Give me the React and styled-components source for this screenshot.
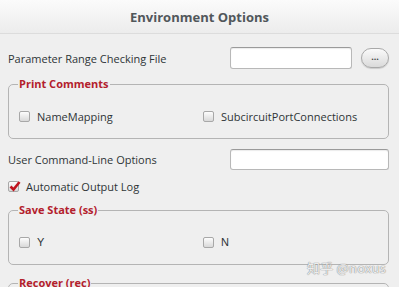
import React from "react";
import styled, { createGlobalStyle } from "styled-components";

const GlobalStyle = createGlobalStyle`
	html, body {
		margin: 0;
		padding: 0;
		background: #efefef;
	}
	body {
		font-family: "Open Sans", "Noto Sans", sans-serif;
		font-size: 11px;
		color: #2e3436;
	}
`;

const Window = styled.div`
	width: 399px;
	height: 287px;
	overflow: hidden;
	position: relative;
	background: #efefef;
`;

const TitleBar = styled.div`
	height: 34px;
	display: flex;
	align-items: center;
	justify-content: center;
	background: linear-gradient(#fbfbfb, #ececec);
	border-bottom: 1px solid #dcdcdc;
	box-sizing: border-box;
	font-size: 13px;
	font-weight: 700;
	color: #51575b;
`;

const Body = styled.div`
	padding: 0 10px 0 8px;
	display: flex;
	flex-direction: column;
`;

const FieldRow = styled.div`
	display: grid;
	grid-template-columns: ${({ cols }) => cols};
	column-gap: 9px;
	align-items: center;
	margin-top: ${({ top }) => top}px;
	height: ${({ h }) => h}px;
`;

const TextInput = styled.div`
	height: 100%;
	background: #fff;
	border: 1px solid #b8b8b8;
	border-top-color: #9a9a9a;
	border-radius: 3px;
	box-sizing: border-box;
	box-shadow: inset 0 1px 1px rgba(0, 0, 0, 0.08);
`;

const DotsButton = styled.div`
	height: 20px;
	border-radius: 10px;
	border: 1px solid #a9a9a9;
	background: linear-gradient(#fafafa, #dadada);
	box-shadow: 0 1px 1px rgba(0, 0, 0, 0.15);
	display: flex;
	align-items: center;
	justify-content: center;
	font-size: 9px;
	font-weight: 700;
	color: #444;
	box-sizing: border-box;
	padding-bottom: 3px;
`;

const Group = styled.fieldset`
	margin: ${({ top }) => top}px 0 0;
	padding: 16px 8px ${({ bottom }) => bottom}px 10px;
	border: 1px solid #b4b4b4;
	border-radius: 5px;
	min-width: 0;
`;

const GroupTitle = styled.legend`
	padding: 0 1px;
	margin-left: -1px;
	font-weight: 700;
	font-size: 11px;
	line-height: 16px;
	color: #b3202c;
`;

const OptionGrid = styled.div`
	display: grid;
	grid-template-columns: 184px 1fr;
`;

const Check = styled.label`
	display: flex;
	align-items: center;
	gap: 7px;
	height: 16px;
	margin-top: ${({ top }) => top || 0}px;
	font-family: ${({ plain }) =>
		plain ? '"Liberation Sans", Arial, sans-serif' : "inherit"};
`;

const Box = styled.span`
	width: 11px;
	height: 11px;
	box-sizing: border-box;
	border: 1px solid #a8a8a8;
	border-radius: 2px;
	background: linear-gradient(#fdfdfd, #d9d9d9);
	position: relative;
	flex: none;
`;

const Tick = styled.svg`
	position: absolute;
	left: 0;
	top: -2px;
`;

const Watermark = styled.div`
	position: absolute;
	left: 307px;
	top: 258px;
	font-family: "Noto Sans CJK SC", "Liberation Sans", sans-serif;
	font-size: 13px;
	color: rgba(255, 255, 255, 0.85);
	text-shadow: 0 0 1px #8a8a8a, 0 0 1px #8a8a8a;
	letter-spacing: 0.2px;
`;

const CheckBox = ({ checked }) => (
	<Box>
		{checked && (
			<Tick width="12" height="12" viewBox="0 0 12 12">
				<path
					d="M1.5 6.5 L4.5 9.5 L10.5 2"
					fill="none"
					stroke="#c0141e"
					strokeWidth="2.6"
				/>
			</Tick>
		)}
	</Box>
);

const App = () => {
	return (
		<Window>
			<GlobalStyle />
			<TitleBar>Environment Options</TitleBar>
			<Body>
				<FieldRow cols="1fr 122px 28px" top={13} h={22}>
					<span>Parameter Range Checking File</span>
					<TextInput />
					<DotsButton>...</DotsButton>
				</FieldRow>

				<Group top={7} bottom={14}>
					<GroupTitle>Print Comments</GroupTitle>
					<OptionGrid>
						<Check>
							<CheckBox /> NameMapping
						</Check>
						<Check>
							<CheckBox /> SubcircuitPortConnections
						</Check>
					</OptionGrid>
				</Group>

				<FieldRow cols="1fr 159px" top={10} h={21}>
					<span>User Command-Line Options</span>
					<TextInput />
				</FieldRow>

				<Check top={8}>
					<CheckBox checked /> Automatic Output Log
				</Check>

				<Group top={8} bottom={14}>
					<GroupTitle>Save State (ss)</GroupTitle>
					<OptionGrid>
						<Check plain>
							<CheckBox /> Y
						</Check>
						<Check plain>
							<CheckBox /> N
						</Check>
					</OptionGrid>
				</Group>

				<Group top={10} bottom={14}>
					<GroupTitle>Recover (rec)</GroupTitle>
				</Group>
			</Body>
			<Watermark>知乎 @noxus</Watermark>
		</Window>
	);
};

export default App;
